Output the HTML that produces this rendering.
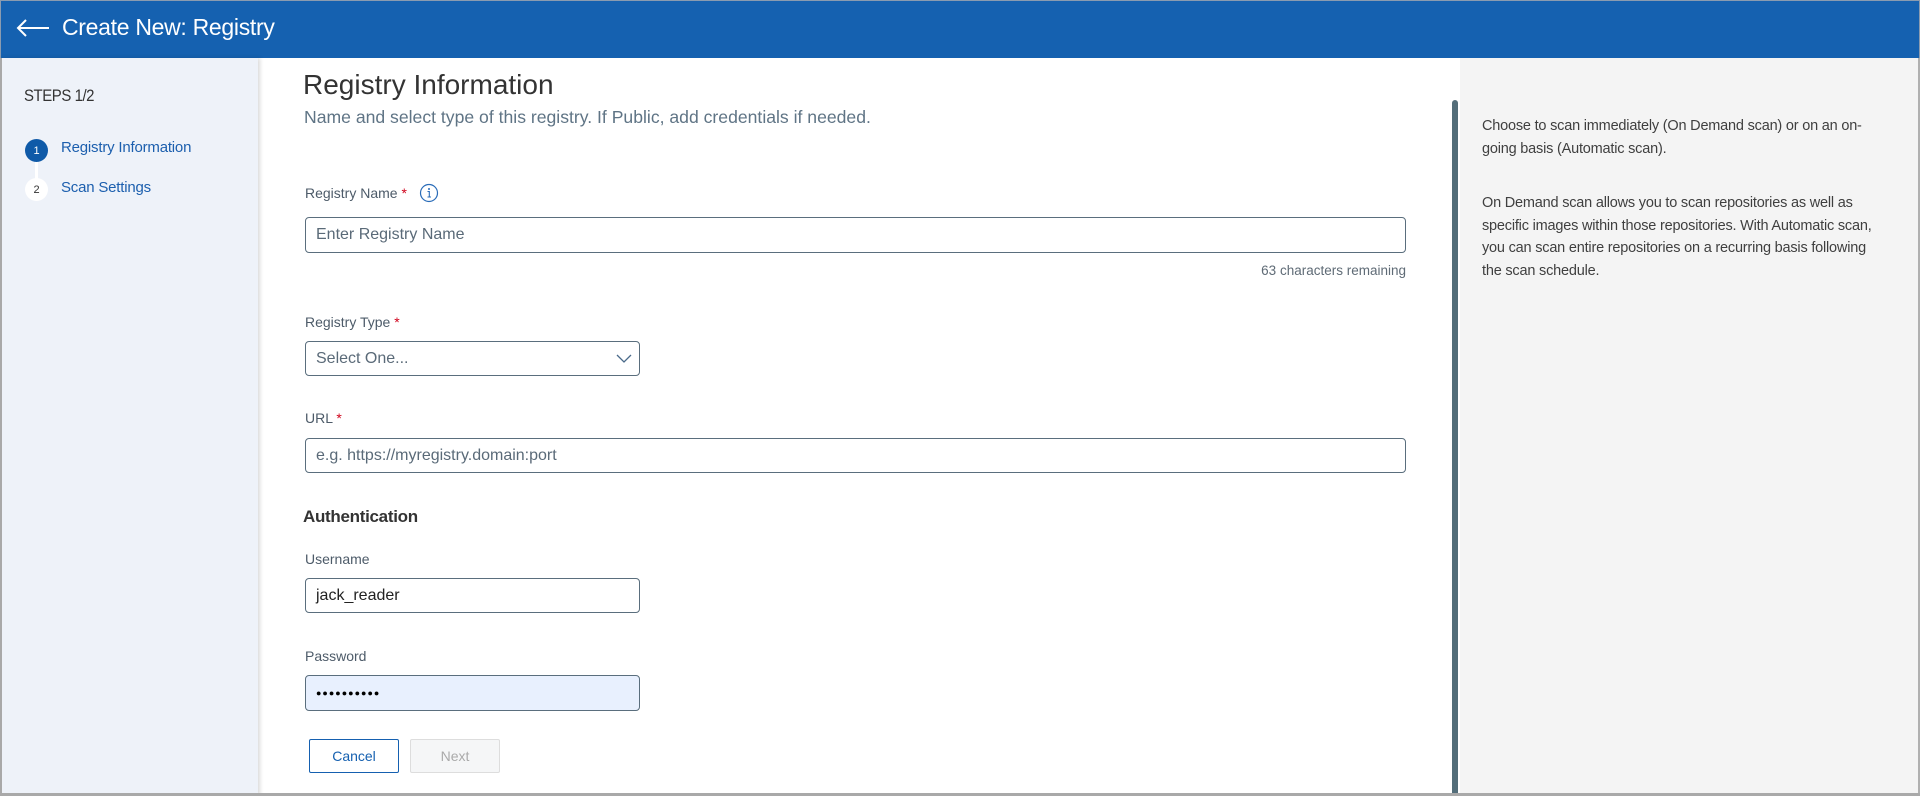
<!DOCTYPE html>
<html><head><meta charset="utf-8"><style>
*{box-sizing:border-box;margin:0;padding:0}
body{width:1920px;height:796px;overflow:hidden;font-family:"Liberation Sans",sans-serif;background:#fff;position:relative}
.abs{position:absolute}
#hdr{left:0;top:0;width:1920px;height:58px;background:#1561b0;border:1px solid #8a9bb0;border-bottom:none}
#hdr .t{left:61px;top:13px;color:#fff;font-size:23px;letter-spacing:-0.3px}
#side{left:0;top:58px;width:258px;height:738px;background:#eef2f9;border-left:2px solid #a9a9a9;box-shadow:2px 0 4px rgba(0,0,0,.15)}
.lbl{color:#4d5b69;font-size:14px}
.req{color:#d0021b}
.inp{border:1px solid #5a6e7d;border-radius:4px;background:#fff;padding-left:10px;font-size:16px;color:#5a6a78;display:flex;align-items:center}
#right{left:1460px;top:58px;width:460px;height:738px;background:#f4f4f4;border-right:2px solid #b0b0b0}
#right p{color:#3f3f3f;font-size:14.5px;line-height:22.5px;width:400px;letter-spacing:-0.2px}
.btn{border-radius:2px;font-size:14px;display:flex;align-items:center;justify-content:center}
</style></head><body>
<div id="hdr" class="abs">
<svg class="abs" style="left:14px;top:17px" width="36" height="20" viewBox="0 0 36 20"><path d="M34 10H3M11 2L3 10l8 8" stroke="#fff" stroke-width="2" fill="none"/></svg>
<div class="abs t">Create New: Registry</div>
</div>
<div id="side" class="abs">
<div class="abs" style="left:22px;top:28px;font-size:17px;color:#333;letter-spacing:-0.5px;transform:scaleX(.88);transform-origin:left">STEPS 1/2</div>
<div class="abs" style="left:33px;top:96px;width:3px;height:38px;background:#fff"></div>
<div class="abs" style="left:23px;top:81px;width:23px;height:23px;border-radius:50%;background:#0f5aa8;color:#fff;font-size:11px;display:flex;align-items:center;justify-content:center">1</div>
<div class="abs" style="left:59px;top:81px;font-size:15px;color:#1c5fae;letter-spacing:-0.2px">Registry Information</div>
<div class="abs" style="left:23px;top:120px;width:23px;height:23px;border-radius:50%;background:#fff;color:#333;font-size:11px;display:flex;align-items:center;justify-content:center">2</div>
<div class="abs" style="left:59px;top:121px;font-size:15px;color:#1c5fae;letter-spacing:-0.2px">Scan Settings</div>
</div>
<div class="abs" style="left:303px;top:69px;font-size:28px;color:#333">Registry Information</div>
<div class="abs" style="left:304px;top:107px;font-size:17.6px;color:#5f7485">Name and select type of this registry. If Public, add credentials if needed.</div>
<div class="abs lbl" style="left:305px;top:185px">Registry Name <span class="req">*</span></div>
<svg class="abs" style="left:419px;top:183px" width="20" height="20" viewBox="0 0 20 20"><circle cx="10" cy="10" r="8.5" stroke="#2a6cb8" stroke-width="1.2" fill="none"/><circle cx="10" cy="6" r="1" fill="#2a6cb8"/><path d="M8.5 8.5H10.3V14M8.5 14H12" stroke="#2a6cb8" stroke-width="1.1" fill="none"/></svg>
<div class="abs inp" style="left:305px;top:217px;width:1101px;height:36px">Enter Registry Name</div>
<div class="abs lbl" style="left:1200px;top:263px;width:206px;text-align:right;font-size:13.5px;color:#5f6b76">63 characters remaining</div>
<div class="abs lbl" style="left:305px;top:314px">Registry Type <span class="req">*</span></div>
<div class="abs inp" style="left:305px;top:341px;width:335px;height:35px">Select One...</div>
<svg class="abs" style="left:615px;top:352px" width="18" height="12" viewBox="0 0 18 12"><path d="M2 3l7 7 7-7" stroke="#4a6a8a" stroke-width="1.3" fill="none"/></svg>
<div class="abs lbl" style="left:305px;top:410px">URL <span class="req">*</span></div>
<div class="abs inp" style="left:305px;top:438px;width:1101px;height:35px">e.g. https://myregistry.domain:port</div>
<div class="abs" style="left:303px;top:507px;font-size:17px;font-weight:bold;color:#333;letter-spacing:-0.3px">Authentication</div>
<div class="abs lbl" style="left:305px;top:551px">Username</div>
<div class="abs inp" style="left:305px;top:578px;width:335px;height:35px;color:#222">jack_reader</div>
<div class="abs lbl" style="left:305px;top:648px">Password</div>
<div class="abs inp" style="left:305px;top:675px;width:335px;height:36px;background:#e8f0fe;color:#000;font-size:9px;letter-spacing:1px">●●●●●●●●●●</div>
<div class="abs btn" style="left:309px;top:739px;width:90px;height:34px;border:1px solid #1560b0;color:#1560b0">Cancel</div>
<div class="abs btn" style="left:410px;top:739px;width:90px;height:34px;border:1px solid #ddd;background:#f5f6f7;color:#aaa">Next</div>
<div class="abs" style="left:1452px;top:100px;width:6px;height:696px;background:#546e7a;border-radius:3px 3px 0 0"></div>
<div id="right" class="abs">
<p class="abs" style="left:22px;top:57px">Choose to scan immediately (On Demand scan) or on an on-going basis (Automatic scan).</p>
<p class="abs" style="left:22px;top:134px">On Demand scan allows you to scan repositories as well as specific images within those repositories. With Automatic scan, you can scan entire repositories on a recurring basis following the scan schedule.</p>
</div>
<div class="abs" style="left:0;top:793px;width:1920px;height:3px;background:#a9a9a9"></div>
</body></html>
